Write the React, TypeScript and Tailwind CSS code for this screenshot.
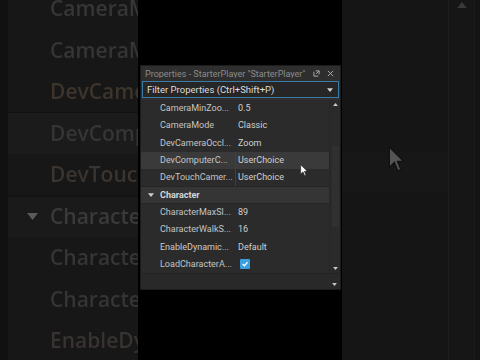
import React from "react";

type Row = { name: string; value?: string; check?: boolean; header?: boolean; hot?: boolean };

const rows: Row[] = [
  { name: "CameraMinZoo...", value: "0.5" },
  { name: "CameraMode", value: "Classic" },
  { name: "DevCameraOccl...", value: "Zoom" },
  { name: "DevComputerC...", value: "UserChoice", hot: true },
  { name: "DevTouchCamer...", value: "UserChoice" },
  { name: "Character", header: true },
  { name: "CharacterMaxSl...", value: "89" },
  { name: "CharacterWalkS...", value: "16" },
  { name: "EnableDynamic...", value: "Default" },
  { name: "LoadCharacterA...", check: true },
];

const bgLeft = [
  { t: "CameraMi", c: "text-[#363636]" },
  { t: "CameraMo", c: "text-[#353535]" },
  { t: "DevCame", c: "text-[#3d342c]", line: true },
  { t: "DevComp", c: "text-[#353535]", light: true },
  { t: "DevTouch", c: "text-[#3b342f]", line: true },
  { t: "Characte", c: "text-[#3a3a3a]", header: true },
  { t: "Character", c: "text-[#353535]" },
  { t: "Character", c: "text-[#353535]" },
  { t: "EnableDy", c: "text-[#383331]" },
];

function Cursor({ className }: { className: string }) {
  return (
    <svg viewBox="0 0 12 19" className={className}>
      <path d="M1 1 L1 15 L4.5 11.5 L7 17.5 L9 16.6 L6.6 10.8 L11 10.8 Z" fill="currentColor" stroke="#111" strokeWidth="0.8" />
    </svg>
  );
}

function Tri({ up, className }: { up?: boolean; className: string }) {
  return (
    <svg viewBox="0 0 8 5" className={className}>
      <path d={up ? "M0 5 L4 0 L8 5 Z" : "M0 0 L8 0 L4 5 Z"} fill="currentColor" />
    </svg>
  );
}

export default function App() {
  return (
    <div className="w-[480px] h-[360px] flex bg-[#161616] overflow-hidden" style={{ fontFamily: "Roboto, 'Noto Sans', sans-serif" }}>
      {/* blurred backdrop, left */}
      <div className="w-[138px] shrink-0 h-full flex bg-[#171717] overflow-hidden">
        <div className="w-[8px] shrink-0 h-full bg-[#111111]" />
        <div className="flex-1 min-w-0 flex flex-col -mt-[12px]">
          {bgLeft.map((r, i) => (
            <div
              key={i}
              className={`h-[41.5px] shrink-0 flex items-center gap-3 whitespace-nowrap overflow-hidden ${r.light ? "bg-[#1b1b1b]" : ""} ${r.header ? "bg-[#1a1a1a] border-t border-[#121212]" : ""} ${r.line ? "border-b border-[#121212]" : ""}`}
            >
              <span className="w-[30px] shrink-0 flex justify-end">
                {r.header && <Tri className="w-[11px] h-[7px] text-[#5a5a5a]" />}
              </span>
              <span className={`shrink-0 text-[21px] font-semibold blur-[0.6px] ${r.c}`} style={{ fontFamily: "'Open Sans', sans-serif" }}>
                {r.t}
              </span>
            </div>
          ))}
        </div>
      </div>

      {/* video column */}
      <div className="w-[204px] shrink-0 h-full bg-black flex flex-col pt-[65px] pl-[2px]">
        <div className="w-[201px] bg-[#2e2e2e] border border-[#1c1c1c] flex flex-col text-[9px] leading-none">
          <div className="h-[12px] flex items-end justify-between gap-2 px-[4px] overflow-hidden">
            <span className="text-[#8c8c8c] whitespace-nowrap overflow-hidden -mb-[1px]">Properties - StarterPlayer "StarterPlayer"</span>
            <div className="shrink-0 flex items-center gap-[7px] pb-[1px] pr-[2px] text-[#b8b8b8]">
              <svg viewBox="0 0 8 8" className="w-[7px] h-[7px]">
                <path d="M1 2 V7 H6 M3 1 H7 V5 M7 1 L3.5 4.5" fill="none" stroke="currentColor" strokeWidth="1" />
              </svg>
              <svg viewBox="0 0 8 8" className="w-[7px] h-[7px]">
                <path d="M1 1 L7 7 M7 1 L1 7" fill="none" stroke="currentColor" strokeWidth="1" />
              </svg>
            </div>
          </div>
          <div className="mx-[1px] mt-[3px] h-[17px] border border-[#3c7aa6] bg-[#262626] flex items-center justify-between pl-[4px] pr-[5px] text-[9.5px]">
            <span className="text-[#dcdcdc] whitespace-nowrap">Filter Properties (Ctrl+Shift+P)</span>
            <Tri className="w-[6px] h-[4px] text-[#cfcfcf]" />
          </div>
          <div className="mt-[2px] flex">
            <div className="flex-1 flex flex-col">
              {rows.map((r, i) =>
                r.header ? (
                  <div key={i} className="h-[17.3px] flex items-center bg-[#353535] border-y border-[#262626]">
                    <span className="w-[19px] flex justify-center">
                      <Tri className="w-[6px] h-[4px] text-[#d0d0d0]" />
                    </span>
                    <span className="font-bold text-[#d6d6d6]">{r.name}</span>
                  </div>
                ) : (
                  <div key={i} className={`relative h-[17.3px] flex items-center ${r.hot ? "bg-[#3a3a3a]" : "bg-[#2b2b2b]"}`}>
                    <span className="w-[19px] shrink-0" />
                    <span className={`w-[75px] shrink-0 whitespace-nowrap ${r.name.startsWith("Enable") ? "text-[#d2c8c8]" : "text-[#c4c4c4]"}`}>{r.name}</span>
                    <span className={`h-full w-px ${r.hot || r.name.startsWith("DevTouch") ? "bg-[#404040]" : "bg-transparent"}`} />
                    <span className="pl-[2px] text-[#d0d0d0] whitespace-nowrap">
                      {r.check ? (
                        <span className="inline-flex w-[10px] h-[10px] rounded-[1px] bg-[#3aa0e0] items-center justify-center ml-[2px]">
                          <svg viewBox="0 0 10 10" className="w-[8px] h-[8px]">
                            <path d="M2 5 L4.2 7.2 L8.2 2.8" fill="none" stroke="white" strokeWidth="1.5" />
                          </svg>
                        </span>
                      ) : (
                        r.value
                      )}
                    </span>
                    {r.hot && <Cursor className="absolute left-[159px] top-[12px] w-[8px] h-[13px] text-white z-10" />}
                  </div>
                )
              )}
            </div>
            <div className="w-[11px] bg-[#2a2a2a] flex flex-col items-center justify-between py-[3px] border-l border-[#262626]">
              <Tri up className="w-[5px] h-[3px] text-[#c8c8c8]" />
              <div className="w-[7px] flex-1 my-[40px] bg-[#303030]" />
              <Tri className="w-[5px] h-[3px] text-[#c8c8c8]" />
            </div>
          </div>
          <div className="h-[16px] bg-[#292929] border-t border-[#222222] flex items-end justify-end pr-[3px] pb-[3px]">
            <Tri className="w-[5px] h-[3px] text-[#c8c8c8]" />
          </div>
        </div>
      </div>

      {/* blurred backdrop, right */}
      <div className="flex-1 h-full flex bg-[#151515]">
        <div className="flex-1 flex flex-col">
          <div className="h-[152px]" />
          <div className="h-[40px] bg-[#171717] flex items-start pl-[46px]">
            <Cursor className="-mt-[6px] w-[17px] h-[27px] text-[#555555] blur-[0.5px]" />
          </div>
        </div>
        <div className="w-[26px] h-full bg-[#161616] border-l border-[#1c1c1c] flex justify-center pt-[2px]">
          <Tri up className="w-[10px] h-[6px] text-[#3a3a3a]" />
        </div>
        <div className="w-[6px] h-full bg-[#141414] border-l border-[#1a1a1a]" />
      </div>
    </div>
  );
}
